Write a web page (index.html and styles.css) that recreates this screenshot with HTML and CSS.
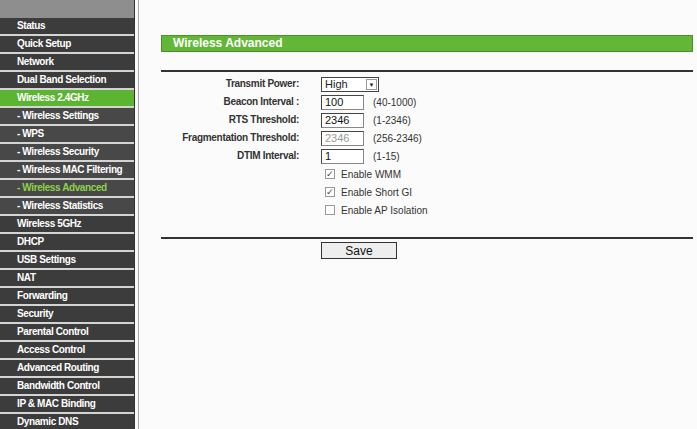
FILE: index.html
```html
<!DOCTYPE html>
<html lang="en">
<head>
    <meta charset="UTF-8">
    <title>Wireless Advanced</title>
    <link rel="stylesheet" href="styles.css">
</head>
<body>
    <div class="page">
        <ul class="menu">
            <li>Status</li>
            <li>Quick Setup</li>
            <li>Network</li>
            <li>Dual Band Selection</li>
            <li class="active">Wireless 2.4GHz</li>
            <li class="sub">- Wireless Settings</li>
            <li class="sub">- WPS</li>
            <li class="sub">- Wireless Security</li>
            <li class="sub">- Wireless MAC Filtering</li>
            <li class="sub current">- Wireless Advanced</li>
            <li class="sub">- Wireless Statistics</li>
            <li>Wireless 5GHz</li>
            <li>DHCP</li>
            <li>USB Settings</li>
            <li>NAT</li>
            <li>Forwarding</li>
            <li>Security</li>
            <li>Parental Control</li>
            <li>Access Control</li>
            <li>Advanced Routing</li>
            <li>Bandwidth Control</li>
            <li>IP &amp; MAC Binding</li>
            <li>Dynamic DNS</li>
        </ul>
        <div class="main">
            <div class="title">Wireless Advanced</div>
            <hr class="rule">
            <div class="form">
                <label>Transmit Power:</label>
                <div class="field">
                    <span class="select">High<span class="arrow">&#9660;</span></span>
                </div>

                <label>Beacon Interval :</label>
                <div class="field"><span class="input">100</span><span class="hint">(40-1000)</span></div>

                <label>RTS Threshold:</label>
                <div class="field"><span class="input">2346</span><span class="hint">(1-2346)</span></div>

                <label>Fragmentation Threshold:</label>
                <div class="field"><span class="input disabled">2346</span><span class="hint">(256-2346)</span></div>

                <label>DTIM Interval:</label>
                <div class="field"><span class="input">1</span><span class="hint">(1-15)</span></div>

                <span></span>
                <div class="field check"><span class="box">&#10003;</span>Enable WMM</div>

                <span></span>
                <div class="field check"><span class="box">&#10003;</span>Enable Short GI</div>

                <span></span>
                <div class="field check"><span class="box"></span>Enable AP Isolation</div>
            </div>
            <hr class="rule bottom">
            <div class="actions">
                <button type="button">Save</button>
            </div>
        </div>
    </div>
</body>
</html>
```

FILE: styles.css
```css
body {
    margin: 0;
    background: #fafafa;
    font-family: "Liberation Sans", Arial, sans-serif;
    font-size: 11px;
    color: #222;
}
.page {
    display: flex;
    height: 429px;
    overflow: hidden;
}
.menu {
    list-style: none;
    margin: 0;
    padding: 18px 0 0 0;
    width: 134px;
    flex-shrink: 0;
    background: #8e8e8e;
    border-right: 1px solid #333;
}
.menu li {
    height: 16px;
    line-height: 16px;
    padding-left: 17px;
    border-bottom: 2px solid #d4d4d4;
    background: #3c3c3c;
    color: #fff;
    font-size: 10px;
    letter-spacing: -0.4px;
    font-weight: bold;
    white-space: nowrap;
}
.menu li.sub {
    background: #484848;
}
.menu li.active {
    background: #5cb532;
}
.menu li.current {
    color: #8fd14a;
}
.main {
    flex: 1;
    margin-left: 3px;
    border-left: 1px solid #a8a8a8;
    padding: 35px 4px 0 22px;
    background: #fbfbfb;
}
.title {
    height: 15px;
    line-height: 15px;
    background: #62b836;
    border: 1px solid #4c8f2b;
    color: #fff;
    font-size: 12px;
    font-weight: bold;
    padding-left: 11px;
}
.rule {
    margin: 18px 0 0 0;
    border: 0;
    border-top: 2px solid #333;
}
.form {
    display: grid;
    grid-template-columns: 138px 1fr;
    column-gap: 22px;
    grid-auto-rows: 18px;
    margin-top: 3px;
}
.form label {
    text-align: right;
    font-weight: bold;
    font-size: 10px;
    letter-spacing: -0.3px;
    color: #333;
    line-height: 18px;
}
.field {
    display: flex;
    align-items: center;
}
.input {
    box-sizing: border-box;
    width: 43px;
    height: 15px;
    line-height: 13px;
    border: 1px solid #888;
    border-top-color: #444;
    border-left-color: #444;
    background: #fff;
    padding-left: 3px;
    color: #111;
}
.input.disabled {
    color: #999;
}
.hint {
    margin-left: 9px;
    font-size: 10px;
    color: #333;
}
.select {
    box-sizing: border-box;
    position: relative;
    width: 58px;
    height: 15px;
    line-height: 13px;
    border: 1px solid #444;
    background: #fff;
    padding-left: 3px;
}
.arrow {
    position: absolute;
    right: 1px;
    top: 1px;
    width: 11px;
    height: 11px;
    border: 1px solid #999;
    font-size: 6px;
    line-height: 11px;
    text-align: center;
    box-sizing: border-box;
}
.check {
    padding-left: 4px;
    font-size: 10px;
    color: #333;
}
.box {
    box-sizing: border-box;
    width: 10px;
    height: 10px;
    border: 1px solid #999;
    background: #fff;
    margin-right: 6px;
    font-size: 9px;
    line-height: 8px;
    text-align: center;
    color: #444;
}
.rule.bottom {
    margin-top: 18px;
}
.actions {
    padding: 3px 0 0 160px;
}
button {
    width: 76px;
    height: 17px;
    padding: 0;
    border: 1px solid #333;
    background: #eee;
    font-family: "Liberation Sans", Arial, sans-serif;
    font-size: 12px;
    color: #111;
}
```
